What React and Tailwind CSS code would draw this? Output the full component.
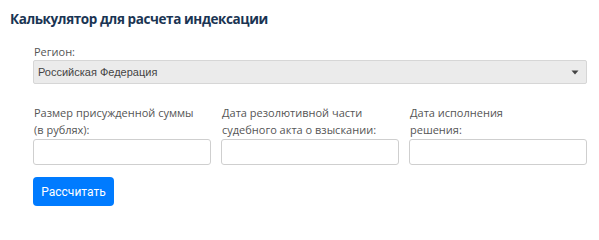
import React from "react";

export default function App() {
  const label = "block text-[11px] leading-[17px] text-[#555555]";
  const input =
    "block w-full h-[26px] border border-[#cfcfcf] rounded-[3px] bg-white";

  return (
    <div className="w-[599px] h-[223px] bg-white" style={{ fontFamily: '"Open Sans", sans-serif' }}>
      <div className="pt-[9px] pl-[10px]">
        <h1 className="text-[13.5px] leading-[20px] font-bold tracking-[-0.4px] text-[#1a3453]">
          Калькулятор для расчета индексации
        </h1>
      </div>

      <div className="pl-[33px] pr-[12px] mt-[14px]">
        {/* Регион */}
        <label className={label + " pl-px"}>Регион:</label>
        <div className="flex items-center justify-between h-[24px] bg-[#ebebeb] border border-[#d6d6d6] rounded-[2px] pl-[4px] pr-[7px]">
          <span className="text-[11px] text-[#444444] font-['Liberation_Sans',Arial,sans-serif]">
            Российская Федерация
          </span>
          <svg width="8" height="5" viewBox="0 0 8 5" className="mt-px">
            <path d="M0.5 0.5 H7.5 L4 4.5 Z" fill="#444444" />
          </svg>
        </div>

        {/* Поля */}
        <div className="grid grid-cols-3 gap-[10px] mt-[20px]">
          <div>
            <label className={label + " pl-px mb-px"}>
              Размер присужденной суммы
              <br />
              (в рублях):
            </label>
            <input type="text" className={input} />
          </div>
          <div>
            <label className={label + " pl-px mb-px"}>
              Дата резолютивной части
              <br />
              судебного акта о взыскании:
            </label>
            <input type="text" className={input} />
          </div>
          <div>
            <label className={label + " pl-px mb-px"}>
              Дата исполнения
              <br />
              решения:
            </label>
            <input type="text" className={input} />
          </div>
        </div>

        <button className="mt-[12px] h-[29px] w-[81px] rounded-[4px] bg-[#007bff] text-white text-[12px] font-['Roboto',sans-serif]">
          Рассчитать
        </button>
      </div>
    </div>
  );
}
